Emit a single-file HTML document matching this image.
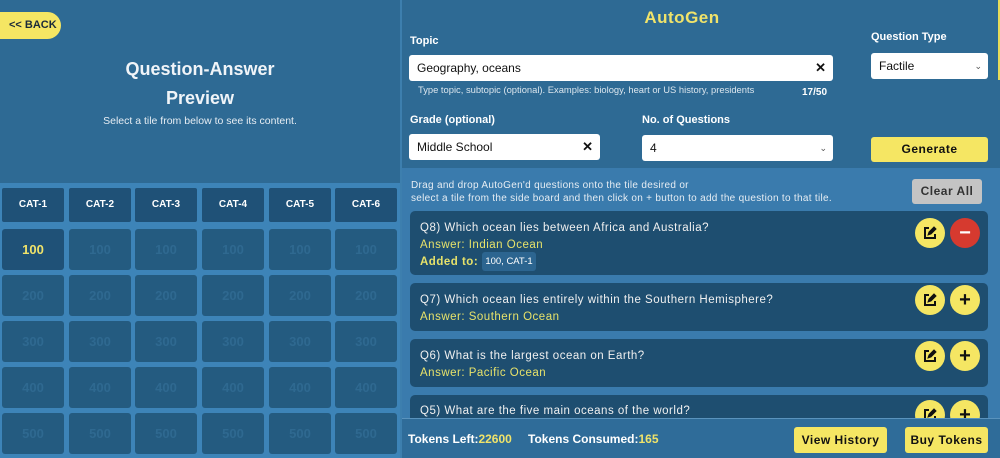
<!DOCTYPE html>
<html><head><style>
*{box-sizing:border-box;margin:0;padding:0}
body{width:1000px;height:458px;overflow:hidden;background:#2e6a94;font-family:"Liberation Sans",sans-serif;position:relative;color:#fff}
.abs{position:absolute}
#left{left:0;top:0;width:400px;height:458px;background:#2e6a94}
.back{left:0;top:12px;width:61px;height:27px;background:#f5e663;border-radius:0 14px 14px 0;color:#1a2a3a;font-weight:bold;font-size:11px;line-height:27px;padding-left:9px}
.title{left:0;width:400px;text-align:center;font-size:18px;font-weight:bold;color:#f0f4f8}
.board{left:0;top:183px;width:400px;height:275px;background:#3d84b8}
.t{position:absolute;width:62px;height:41px;background:#245b80;border-radius:3px;text-align:center;line-height:41px;font-size:13px;font-weight:bold;color:#2f6990}
.h{height:34px;line-height:34px;background:#1f5177;color:#fff;font-size:10px;border-radius:2px}
#right{left:400px;top:0;width:600px;height:458px;background:#2e6a94;border-left:2px solid #3d7fae}
.lbl{font-size:11px;font-weight:bold;color:#fff}
.inp{background:#fff;border-radius:3px;color:#111;font-size:12px;padding-left:8px;height:26px;line-height:26px}
.x{position:absolute;right:7px;top:0;font-weight:bold;font-size:13px;color:#111}
.chev{position:absolute;right:6px;top:0;font-size:9px;color:#555}
.ybtn{background:#f5e663;color:#111;font-weight:bold;border-radius:3px;text-align:center;letter-spacing:.5px}
.lower{left:0;top:168px;width:598px;height:250px;background:#3a7bad}
.card{position:absolute;left:8px;width:578px;background:#1e4e70;border-radius:5px}
.q{position:absolute;left:10px;font-size:11.5px;color:#f0f0f0;letter-spacing:.5px}
.a{position:absolute;left:10px;font-size:11.5px;color:#e7e26a;letter-spacing:.5px}
.circ{position:absolute;width:30px;height:30px;border-radius:50%;background:#f5e663;color:#111;text-align:center;line-height:30px;font-weight:bold;font-size:20px}
.circ svg{position:absolute;left:8px;top:8px}
.foot{left:0;top:418px;width:598px;height:40px;background:#2f6c99;border-top:1px solid #5a93bd}
</style></head><body>
<div id="left" class="abs">
 <div class="abs back">&lt;&lt; BACK</div>
 <div class="abs title" style="top:59px">Question-Answer</div>
 <div class="abs title" style="top:88px">Preview</div>
 <div class="abs" style="top:115px;width:400px;text-align:center;font-size:10.5px;color:#e6edf3">Select a tile from below to see its content.</div>
 <div class="abs board">
  <div class="t h" style="left:2px;top:5px">CAT-1</div>
  <div class="t h" style="left:69px;top:5px">CAT-2</div>
  <div class="t h" style="left:135px;top:5px">CAT-3</div>
  <div class="t h" style="left:202px;top:5px">CAT-4</div>
  <div class="t h" style="left:269px;top:5px">CAT-5</div>
  <div class="t h" style="left:335px;top:5px">CAT-6</div>
  <div class="t" style="left:2px;top:46px;background:#1f5177;color:#f0e36a">100</div>
  <div class="t" style="left:69px;top:46px">100</div><div class="t" style="left:135px;top:46px">100</div><div class="t" style="left:202px;top:46px">100</div><div class="t" style="left:269px;top:46px">100</div><div class="t" style="left:335px;top:46px">100</div>
  <div class="t" style="left:2px;top:92px">200</div><div class="t" style="left:69px;top:92px">200</div><div class="t" style="left:135px;top:92px">200</div><div class="t" style="left:202px;top:92px">200</div><div class="t" style="left:269px;top:92px">200</div><div class="t" style="left:335px;top:92px">200</div>
  <div class="t" style="left:2px;top:138px">300</div><div class="t" style="left:69px;top:138px">300</div><div class="t" style="left:135px;top:138px">300</div><div class="t" style="left:202px;top:138px">300</div><div class="t" style="left:269px;top:138px">300</div><div class="t" style="left:335px;top:138px">300</div>
  <div class="t" style="left:2px;top:184px">400</div><div class="t" style="left:69px;top:184px">400</div><div class="t" style="left:135px;top:184px">400</div><div class="t" style="left:202px;top:184px">400</div><div class="t" style="left:269px;top:184px">400</div><div class="t" style="left:335px;top:184px">400</div>
  <div class="t" style="left:2px;top:230px">500</div><div class="t" style="left:69px;top:230px">500</div><div class="t" style="left:135px;top:230px">500</div><div class="t" style="left:202px;top:230px">500</div><div class="t" style="left:269px;top:230px">500</div><div class="t" style="left:335px;top:230px">500</div>
 </div>
</div>
<div id="right" class="abs">
 <div class="abs" style="left:0;top:8px;width:560px;text-align:center;font-size:17px;font-weight:bold;color:#f0e36a;letter-spacing:.5px">AutoGen</div>
 <div class="abs lbl" style="left:8px;top:35px">Topic</div>
 <div class="abs inp" style="left:7px;top:55px;width:424px">Geography, oceans<span class="x">✕</span></div>
 <div class="abs" style="left:16px;top:84px;font-size:9.4px;color:#dbe6ee">Type topic, subtopic (optional). Examples: biology, heart or US history, presidents</div>
 <div class="abs" style="left:400px;top:87px;font-size:10px;font-weight:bold">17/50</div>
 <div class="abs lbl" style="left:469px;top:31px">Question Type</div>
 <div class="abs inp" style="left:469px;top:53px;width:117px">Factile<span class="chev">⌄</span></div>
 <div class="abs lbl" style="left:8px;top:114px">Grade (optional)</div>
 <div class="abs inp" style="left:7px;top:134px;width:191px">Middle School<span class="x">✕</span></div>
 <div class="abs lbl" style="left:240px;top:114px">No. of Questions</div>
 <div class="abs inp" style="left:240px;top:135px;width:191px">4<span class="chev">⌄</span></div>
 <div class="abs ybtn" style="left:469px;top:137px;width:117px;height:25px;line-height:25px;font-size:12px">Generate</div>
 <div class="abs lower">
  <div class="abs" style="left:9px;top:11px;font-size:10px;color:#e6edf3;line-height:13px;letter-spacing:.3px">Drag and drop AutoGen'd questions onto the tile desired or<br>select a tile from the side board and then click on + button to add the question to that tile.</div>
  <div class="abs" style="left:510px;top:11px;width:70px;height:25px;background:#c4c4c4;border-radius:3px;color:#333;font-weight:bold;font-size:12px;text-align:center;line-height:25px;letter-spacing:.5px">Clear All</div>
  <div class="card" style="top:43px;height:64px">
   <div class="q" style="top:11px">Q8) Which ocean lies between Africa and Australia?</div>
   <div class="a" style="top:28px">Answer: Indian Ocean</div>
   <div class="a" style="top:45px;font-weight:bold">Added to:</div>
   <div class="abs" style="left:72px;top:41px;width:54px;height:19px;background:#2c6590;border-radius:3px;font-size:9.5px;line-height:19px;text-align:center">100, CAT-1</div>
   <div class="circ" style="left:505px;top:7px"><svg width="14" height="14" viewBox="0 0 14 14" fill="none" stroke="#111" stroke-width="2"><path d="M6 2H2v10h10V8"/><path d="M5 9l1-3 5-5 2 2-5 5z" fill="#111" stroke-width="1"/></svg></div>
   <div class="circ" style="left:540px;top:7px;background:#d63a2f;color:#fff">−</div>
  </div>
  <div class="card" style="top:115px;height:48px">
   <div class="q" style="top:11px">Q7) Which ocean lies entirely within the Southern Hemisphere?</div>
   <div class="a" style="top:28px">Answer: Southern Ocean</div>
   <div class="circ" style="left:505px;top:2px"><svg width="14" height="14" viewBox="0 0 14 14" fill="none" stroke="#111" stroke-width="2"><path d="M6 2H2v10h10V8"/><path d="M5 9l1-3 5-5 2 2-5 5z" fill="#111" stroke-width="1"/></svg></div><div class="circ" style="left:540px;top:2px">+</div>
  </div>
  <div class="card" style="top:171px;height:48px">
   <div class="q" style="top:11px">Q6) What is the largest ocean on Earth?</div>
   <div class="a" style="top:28px">Answer: Pacific Ocean</div>
   <div class="circ" style="left:505px;top:2px"><svg width="14" height="14" viewBox="0 0 14 14" fill="none" stroke="#111" stroke-width="2"><path d="M6 2H2v10h10V8"/><path d="M5 9l1-3 5-5 2 2-5 5z" fill="#111" stroke-width="1"/></svg></div><div class="circ" style="left:540px;top:2px">+</div>
  </div>
  <div class="card" style="top:227px;height:40px">
   <div class="q" style="top:10px">Q5) What are the five main oceans of the world?</div>
   <div class="circ" style="left:505px;top:5px"><svg width="14" height="14" viewBox="0 0 14 14" fill="none" stroke="#111" stroke-width="2"><path d="M6 2H2v10h10V8"/><path d="M5 9l1-3 5-5 2 2-5 5z" fill="#111" stroke-width="1"/></svg></div><div class="circ" style="left:540px;top:5px">+</div>
  </div>
 </div>
 <div class="abs foot">
  <div class="abs" style="left:6px;top:13px;font-size:12px;font-weight:bold">Tokens Left:<span style="color:#f0e36a">22600</span></div>
  <div class="abs" style="left:126px;top:13px;font-size:12px;font-weight:bold">Tokens Consumed:<span style="color:#f0e36a">165</span></div>
  <div class="abs ybtn" style="left:392px;top:8px;width:93px;height:26px;line-height:26px;font-size:12px">View History</div>
  <div class="abs ybtn" style="left:503px;top:8px;width:83px;height:26px;line-height:26px;font-size:12px">Buy Tokens</div>
 </div>
 <div class="abs" style="left:596px;top:0;width:2px;height:80px;background:#e8dd5a"></div>
</div>
</body></html>
